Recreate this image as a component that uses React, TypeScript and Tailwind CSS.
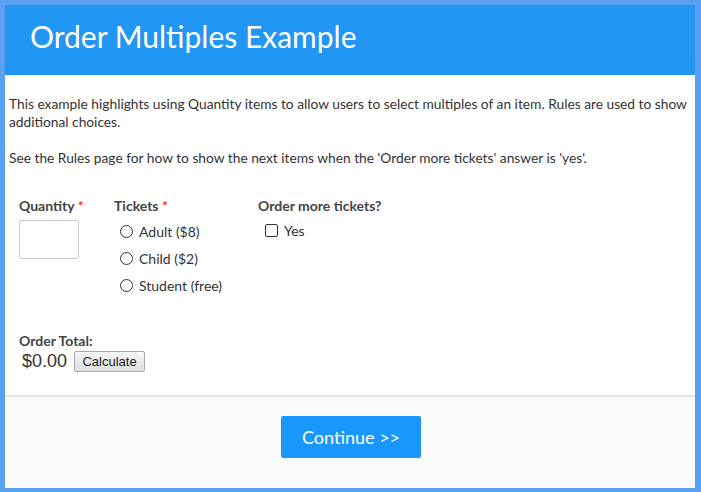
import React from "react";

const font = { fontFamily: "Lato, 'Noto Sans', sans-serif" };

function Radio({ label }: { label: string }) {
  return (
    <div className="flex items-center h-[27px]">
      <div className="w-[13px] h-[13px] rounded-full border border-[#333] bg-white" />
      <span className="ml-[6px] text-[14px] leading-[18px] text-[#333]">{label}</span>
    </div>
  );
}

export default function App() {
  return (
    <div
      className="w-[701px] h-[492px] bg-[#5aa0f2] pt-[5px] pl-[5px] pr-[6px] pb-[4px]"
      style={font}
    >
      <div className="w-full h-full bg-white flex flex-col">
        <div className="h-[70px] bg-[#2196f3] pl-[25px] pt-[13px] shrink-0">
          <h1 className="text-white text-[30px] leading-[36px] font-normal">Order Multiples Example</h1>
        </div>
        <div className="flex-1 pt-[20px] pl-[4px] pr-[2px]">
          <p className="text-[13.75px] leading-[18px] text-[#333]">
            This example highlights using Quantity items to allow users to select multiples of an item. Rules are used to show additional choices.
            <br />
            <br />
            See the Rules page for how to show the next items when the 'Order more tickets' answer is 'yes'.
          </p>
          <div className="flex pl-[10px] mt-[30px]">
            <div className="w-[95px] shrink-0">
              <div className="text-[14px] leading-[18px] font-bold text-[#444]">
                Quantity <span className="text-[#e53935]">*</span>
              </div>
              <div className="mt-[5px] w-[60px] h-[39px] border border-[#ccc] rounded-[2px] bg-white" />
            </div>
            <div className="w-[144px] shrink-0">
              <div className="text-[14px] leading-[18px] font-bold text-[#444]">
                Tickets <span className="text-[#e53935]">*</span>
              </div>
              <div className="pl-[6px] mt-[3px]">
                <Radio label="Adult ($8)" />
                <Radio label="Child ($2)" />
                <Radio label="Student (free)" />
              </div>
            </div>
            <div>
              <div className="text-[14px] leading-[18px] font-bold text-[#444]">Order more tickets?</div>
              <div className="flex items-center pl-[7px] h-[27px] mt-[2px]">
                <div className="w-[13px] h-[13px] border border-[#333] rounded-[2px] bg-white" />
                <span className="ml-[6px] text-[14px] leading-[18px] text-[#333]">Yes</span>
              </div>
            </div>
          </div>
          <div className="pl-[10px] mt-[33px]">
            <div className="text-[14px] leading-[18px] font-bold text-[#444]">Order Total:</div>
            <div className="flex items-center mt-[0px]">
              <span
                className="ml-[3px] text-[18px] leading-[22px] text-[#333]"
                style={{ fontFamily: "'Liberation Sans', Arial, sans-serif" }}
              >
                $0.00
              </span>
              <button
                className="ml-[7px] w-[71px] h-[21px] border border-[#aaa] rounded-[2px] bg-gradient-to-b from-[#f8f8f8] to-[#dedede] text-[13px] text-[#222] leading-none"
                style={{ fontFamily: "'Liberation Sans', Arial, sans-serif" }}
              >
                Calculate
              </button>
            </div>
          </div>
        </div>
        <div className="h-[93px] shrink-0 border-t-2 border-[#e3e3e3] bg-[#fafafa] flex justify-center pt-[19px] pl-[2px]">
          <button className="w-[140px] h-[42px] bg-[#1a97fc] rounded-[2px] text-white text-[18px]">
            Continue &gt;&gt;
          </button>
        </div>
      </div>
    </div>
  );
}
